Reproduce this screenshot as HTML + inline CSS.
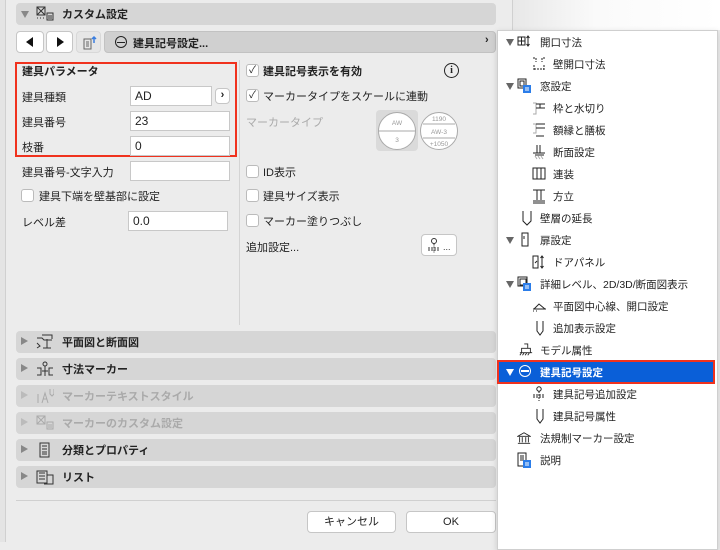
<!DOCTYPE html>
<html><head><meta charset="utf-8"><style>
*{box-sizing:border-box;margin:0;padding:0}
body{width:720px;height:542px;background:#ececec;font-family:"Liberation Sans","Noto Sans CJK JP",sans-serif;font-size:11px;color:#222;position:relative;overflow:hidden}
.a{position:absolute}
.bar{position:absolute;left:16px;width:480px;height:22px;background:#d6d6d6;border-radius:4px;font-weight:bold;font-size:11px}
.bar .t{position:absolute;left:5px;top:6px;width:0;height:0;border-left:7px solid #888;border-top:4.5px solid transparent;border-bottom:4.5px solid transparent}
.bar .ic{position:absolute;left:20px;top:3px;width:18px;height:16px}
.bar .l{position:absolute;left:46px;top:3px}
.dis{color:#aaa}
.inp{position:absolute;background:#fff;border:1px solid #c8c8c8;height:20px;font-size:12px;padding:2px 4px}
.cb{position:absolute;width:13px;height:13px;background:#fff;border:1px solid #bbb;border-radius:3px}
.btn{position:absolute;background:#fff;border:1px solid #c6c6c6;border-radius:4px;text-align:center}
.r{position:absolute;font-size:10.5px;white-space:nowrap}
.tri{position:absolute;width:0;height:0;border-top:7px solid #666;border-left:4.5px solid transparent;border-right:4.5px solid transparent}
.ti{position:absolute;width:14px;height:16px}
.lb{position:absolute;top:-1px}
</style></head><body>
<div class="a" style="left:0;top:0;width:6px;height:542px;background:#e4e4e4;border-right:1px solid #d0d0d0"></div>
<div class="a" style="left:512px;top:0;width:208px;height:30px;background:linear-gradient(90deg,#e8e8e8,#fafafa 40%,#fff);border-left:1px solid #d0d0d0"></div>

<div class="bar" style="top:3px"><div class="t" style="border-left:4.5px solid transparent;border-top:7px solid #888;border-right:4.5px solid transparent;border-bottom:none;top:8px"></div>
<svg class="ic" viewBox="0 0 18 16" fill="none" stroke="#333"><rect x="1" y="1" width="8" height="8"/><path d="M1 1l8 8M9 1L1 9M11 7h6v7h-6zM12 10h4M12 12h4M1 12h1M4 12h1M7 12h1"/></svg><div class="l">カスタム設定</div></div>

<div class="btn" style="left:16px;top:31px;width:28px;height:22px"><div class="a" style="left:9px;top:5px;border-right:7px solid #111;border-top:5.5px solid transparent;border-bottom:5.5px solid transparent"></div></div>
<div class="btn" style="left:46px;top:31px;width:27px;height:22px"><div class="a" style="left:10px;top:5px;border-left:7px solid #111;border-top:5.5px solid transparent;border-bottom:5.5px solid transparent"></div></div>
<div class="btn" style="left:76px;top:31px;width:25px;height:22px;background:#e6e6e6;border-color:#d8d8d8"><svg class="a" style="left:5px;top:3px" width="16" height="16" viewBox="0 0 16 16" fill="none" stroke="#666"><path d="M2 4h7v10H2zM4 7h3M4 9h3M4 11h3"/><path d="M12 8V2M10 4l2-2 2 2" stroke="#3a7ee0" stroke-width="1.5"/></svg></div>
<div class="a" style="left:104px;top:31px;width:392px;height:22px;background:#d0d0d0;border-radius:4px;border:1px solid #c2c2c2">
<div class="a" style="left:10px;top:4px;width:12px;height:12px;border:1.3px solid #222;border-radius:50%"></div><div class="a" style="left:12px;top:9.5px;width:8px;height:1.5px;background:#222"></div>
<div class="a" style="left:28px;top:3px;font-weight:bold">建具記号設定...</div><div class="a" style="left:380px;top:2px;font-weight:bold">›</div></div>

<div class="a" style="left:15px;top:62px;width:222px;height:95px;border:2px solid #f0321e"></div>
<div class="a" style="left:22px;top:63px;font-weight:bold">建具パラメータ</div>
<div class="a" style="left:22px;top:89px">建具種類</div>
<div class="inp" style="left:130px;top:86px;width:82px">AD</div>
<div class="btn" style="left:215px;top:88px;width:15px;height:16px;font-size:11px;font-weight:bold;line-height:13px">›</div>
<div class="a" style="left:22px;top:114px">建具番号</div>
<div class="inp" style="left:130px;top:111px;width:100px">23</div>
<div class="a" style="left:22px;top:139px">枝番</div>
<div class="inp" style="left:130px;top:136px;width:100px">0</div>
<div class="a" style="left:22px;top:164px">建具番号-文字入力</div>
<div class="inp" style="left:130px;top:161px;width:100px"></div>
<div class="cb" style="left:21px;top:189px"></div><div class="a" style="left:39px;top:188px">建具下端を壁基部に設定</div>
<div class="a" style="left:22px;top:214px">レベル差</div>
<div class="inp" style="left:128px;top:211px;width:100px">0.0</div>

<div class="a" style="left:239px;top:60px;width:1px;height:265px;background:#d4d4d4"></div>
<div class="cb" style="left:246px;top:64px;font-size:10px;line-height:11px;text-align:center">✓</div><div class="a" style="left:263px;top:63px;font-weight:bold">建具記号表示を有効</div>
<div class="a" style="left:444px;top:63px;width:15px;height:15px;border:1.3px solid #222;border-radius:50%;text-align:center;font-size:10px;line-height:13px;font-family:'Liberation Serif',serif;font-weight:bold">i</div>
<div class="cb" style="left:246px;top:89px;font-size:10px;line-height:11px;text-align:center">✓</div><div class="a" style="left:263px;top:88px">マーカータイプをスケールに連動</div>
<div class="a dis" style="left:246px;top:114px">マーカータイプ</div>
<div class="a" style="left:376px;top:110px;width:42px;height:41px;background:#dadada;border-radius:4px"></div>
<svg class="a" style="left:376px;top:110px" width="84" height="42" viewBox="0 0 84 42" fill="#fff" stroke="#aaa" font-family="Liberation Sans" font-size="6.5"><circle cx="21" cy="21" r="18.5"/><path d="M2.5 21h37"/><text x="21" y="15" text-anchor="middle" fill="#999" stroke="none">AW</text><text x="21" y="32" text-anchor="middle" fill="#999" stroke="none">3</text><circle cx="63" cy="21" r="18.5"/><path d="M47 14h32M47 28h32"/><text x="63" y="11" text-anchor="middle" fill="#999" stroke="none">1190</text><text x="63" y="24" text-anchor="middle" fill="#999" stroke="none">AW-3</text><text x="63" y="36" text-anchor="middle" fill="#999" stroke="none">+1050</text></svg>
<div class="cb" style="left:246px;top:165px"></div><div class="a" style="left:263px;top:164px">ID表示</div>
<div class="cb" style="left:246px;top:189px"></div><div class="a" style="left:263px;top:188px">建具サイズ表示</div>
<div class="cb" style="left:246px;top:214px"></div><div class="a" style="left:263px;top:213px">マーカー塗りつぶし</div>
<div class="a" style="left:246px;top:239px">追加設定...</div>
<div class="btn" style="left:421px;top:234px;width:36px;height:22px"><svg class="a" style="left:4px;top:2px" width="28" height="17" viewBox="0 0 28 17" fill="none" stroke="#333"><circle cx="8" cy="4" r="2.5"/><path d="M8 6.5V16M2 11h12M2 13h12" stroke-dasharray="2 1"/><text x="17" y="13" fill="#333" stroke="none" font-size="9">...</text></svg></div>

<div class="bar" style="top:331px"><div class="t"></div><svg class="ic" viewBox="0 0 18 16" fill="none" stroke="#333"><path d="M1 4h5l2 2h8M6 1h10v4M11 5v9M7 14h8M1 9l3 3-3 2"/></svg><div class="l">平面図と断面図</div></div>
<div class="bar" style="top:358px"><div class="t"></div><svg class="ic" viewBox="0 0 18 16" fill="none" stroke="#333"><circle cx="9" cy="3" r="2"/><path d="M9 5v10M1 7h4v7H1M17 7h-4v7h4M6 10h6" /></svg><div class="l">寸法マーカー</div></div>
<div class="bar dis" style="top:385px"><div class="t" style="border-left-color:#bbb"></div><svg class="ic" viewBox="0 0 18 16" fill="none" stroke="#aaa"><path d="M2 6v9M6 15l3-10 3 10M7 11h4M14 1v5l2 2 2-2V1"/></svg><div class="l">マーカーテキストスタイル</div></div>
<div class="bar dis" style="top:412px"><div class="t" style="border-left-color:#bbb"></div><svg class="ic" viewBox="0 0 18 16" fill="none" stroke="#aaa"><rect x="1" y="1" width="8" height="8"/><path d="M1 1l8 8M9 1L1 9M11 7h6v7h-6zM12 10h4M12 12h4"/></svg><div class="l">マーカーのカスタム設定</div></div>
<div class="bar" style="top:439px"><div class="t"></div><svg class="ic" viewBox="0 0 18 16" fill="none" stroke="#333"><path d="M4 1h9v14H4zM6 4h5M6 7h5M6 10h5M6 12h5"/></svg><div class="l">分類とプロパティ</div></div>
<div class="bar" style="top:466px"><div class="t"></div><svg class="ic" viewBox="0 0 18 16" fill="none" stroke="#333"><path d="M1 2h10v12H1zM3 4h6M3 7h6M3 10h6M11 6h6v9h-9"/></svg><div class="l">リスト</div></div>

<div class="a" style="left:16px;top:500px;width:480px;height:1px;background:#d0d0d0"></div>
<div class="btn" style="left:307px;top:511px;width:89px;height:22px;line-height:20px">キャンセル</div>
<div class="btn" style="left:406px;top:511px;width:90px;height:22px;line-height:20px">OK</div>

<div class="a" style="left:497px;top:30px;width:221px;height:520px;background:#fff;border:1px solid #cfcfcf;box-shadow:0 2px 6px rgba(0,0,0,.15)"></div>

<div class="tri" style="left:506px;top:39px"></div><svg class="ti" style="left:517px;top:34px" viewBox="0 0 14 16" fill="none" stroke="#222"><rect x="1" y="3" width="7" height="8"/><path d="M4.5 3v8M1 7h7M11 2v10M9.5 4L11 2l1.5 2M9.5 10l1.5 2 1.5-2"/></svg><div class="r" style="left:540px;top:35px">開口寸法</div>
<svg class="ti" style="left:532px;top:56px" viewBox="0 0 14 16" fill="none" stroke="#222"><path d="M1 2h3v4M13 2h-3v4M2 9v5M12 9v5M2 13h10" stroke-dasharray="2 1"/></svg><div class="r" style="left:553px;top:57px">壁開口寸法</div>
<div class="tri" style="left:506px;top:83px"></div><svg class="ti" style="left:517px;top:78px" viewBox="0 0 14 16" fill="none" stroke="#222"><rect x="1" y="1" width="8" height="9"/><rect x="3" y="3" width="4" height="5"/><rect x="6" y="7" width="8" height="8" fill="#2b7de9" stroke="none"/><path d="M8 10h4M8 12h4" stroke="#fff"/></svg><div class="r" style="left:540px;top:79px">窓設定</div>
<svg class="ti" style="left:532px;top:100px" viewBox="0 0 14 16" fill="none" stroke="#222"><path d="M1 3h3v11H1" stroke="#aaa"/><path d="M4 4h9M4 8h9M8 4v4"/></svg><div class="r" style="left:553px;top:101px">枠と水切り</div>
<svg class="ti" style="left:532px;top:122px" viewBox="0 0 14 16" fill="none" stroke="#222"><path d="M1 2h3v9H1" stroke="#aaa"/><path d="M4 2h9M4 6h9M4 14h8"/></svg><div class="r" style="left:553px;top:123px">額縁と膳板</div>
<svg class="ti" style="left:532px;top:144px" viewBox="0 0 14 16" fill="none" stroke="#222"><path d="M5 1v8M8 1v8M1 9h12M3 11h9" /><path d="M3 12l2 3M6 12l2 3M9 12l2 3" stroke="#aaa"/></svg><div class="r" style="left:553px;top:145px">断面設定</div>
<svg class="ti" style="left:532px;top:166px" viewBox="0 0 14 16" fill="none" stroke="#222"><rect x="1" y="2" width="12" height="11"/><path d="M5 2v11M9 2v11"/></svg><div class="r" style="left:553px;top:167px">連装</div>
<svg class="ti" style="left:532px;top:188px" viewBox="0 0 14 16" fill="none" stroke="#222"><path d="M1 2h12M5 2v10M9 2v10M1 13h12M1 15h12"/></svg><div class="r" style="left:553px;top:189px">方立</div>
<svg class="ti" style="left:520px;top:210px" viewBox="0 0 14 16" fill="none" stroke="#222"><path d="M3 1v10l4 4 4-4V1"/></svg><div class="r" style="left:540px;top:211px">壁層の延長</div>
<div class="tri" style="left:506px;top:237px"></div><svg class="ti" style="left:519px;top:232px" viewBox="0 0 14 16" fill="none" stroke="#222"><rect x="3" y="1" width="6" height="13"/><path d="M5 4v3"/></svg><div class="r" style="left:540px;top:233px">扉設定</div>
<svg class="ti" style="left:532px;top:254px" viewBox="0 0 14 16" fill="none" stroke="#222"><rect x="1" y="2" width="5" height="12"/><path d="M3 9l2-2M10 2v12M8.5 4L10 2l1.5 2M8.5 12l1.5 2 1.5-2"/></svg><div class="r" style="left:553px;top:255px">ドアパネル</div>
<div class="tri" style="left:506px;top:281px"></div><svg class="ti" style="left:517px;top:276px" viewBox="0 0 14 16" fill="none" stroke="#222"><rect x="1" y="1" width="9" height="9"/><rect x="3" y="3" width="6" height="6"/><rect x="6" y="7" width="8" height="8" fill="#2b7de9" stroke="none"/><path d="M8 10h4M8 12h4" stroke="#fff"/></svg><div class="r" style="left:540px;top:277px">詳細レベル、2D/3D/断面図表示</div>
<svg class="ti" style="left:532px;top:298px" viewBox="0 0 14 16" fill="none" stroke="#222"><path d="M1 11h13M2 11l5-5 6 5M1 13h1M4 13h1" /></svg><div class="r" style="left:553px;top:299px">平面図中心線、開口設定</div>
<svg class="ti" style="left:534px;top:320px" viewBox="0 0 14 16" fill="none" stroke="#222"><path d="M3 1v10l3 4 3-4V1"/></svg><div class="r" style="left:553px;top:321px">追加表示設定</div>
<svg class="ti" style="left:519px;top:342px" viewBox="0 0 16 16" fill="none" stroke="#222"><path d="M6 1h4v5M3 6h10v5H3zM1 11h14M1 14l2-3M4 14l2-3M7 14l2-3M10 14l2-3"/></svg><div class="r" style="left:540px;top:343px">モデル属性</div>

<div class="a" style="left:497px;top:360px;width:218px;height:24px;background:#0a5fd8;border:2px solid #f0321e"></div>
<div class="a" style="left:506px;top:369px;border-top:7px solid #fff;border-left:4.5px solid transparent;border-right:4.5px solid transparent"></div>
<div class="a" style="left:519px;top:365px;width:12px;height:12px;border:1.5px solid #fff;border-radius:50%"></div><div class="a" style="left:521px;top:370px;width:8px;height:2px;background:#fff"></div>
<div class="r" style="left:540px;top:365px;color:#fff;font-weight:bold">建具記号設定</div>

<svg class="ti" style="left:532px;top:386px" viewBox="0 0 14 16" fill="none" stroke="#222"><circle cx="7" cy="3" r="2.2"/><path d="M7 5v10M1 9h12M1 11h12" stroke-dasharray="2 1"/></svg><div class="r" style="left:553px;top:387px">建具記号追加設定</div>
<svg class="ti" style="left:534px;top:408px" viewBox="0 0 14 16" fill="none" stroke="#222"><path d="M3 1v10l3 4 3-4V1"/></svg><div class="r" style="left:553px;top:409px">建具記号属性</div>
<svg class="ti" style="left:517px;top:430px" viewBox="0 0 16 16" fill="none" stroke="#222"><path d="M1 6l7-4 7 4zM3 7v6M6 7v6M10 7v6M13 7v6M1 14h14"/></svg><div class="r" style="left:540px;top:431px">法規制マーカー設定</div>
<svg class="ti" style="left:517px;top:452px" viewBox="0 0 14 16" fill="none" stroke="#222"><path d="M1 1h8v13H1zM3 4h4M3 6h4M3 8h4"/><rect x="6" y="8" width="8" height="8" fill="#2b7de9" stroke="none"/><path d="M8 11h4M8 13h4" stroke="#fff"/></svg><div class="r" style="left:540px;top:453px">説明</div>
</body></html>
